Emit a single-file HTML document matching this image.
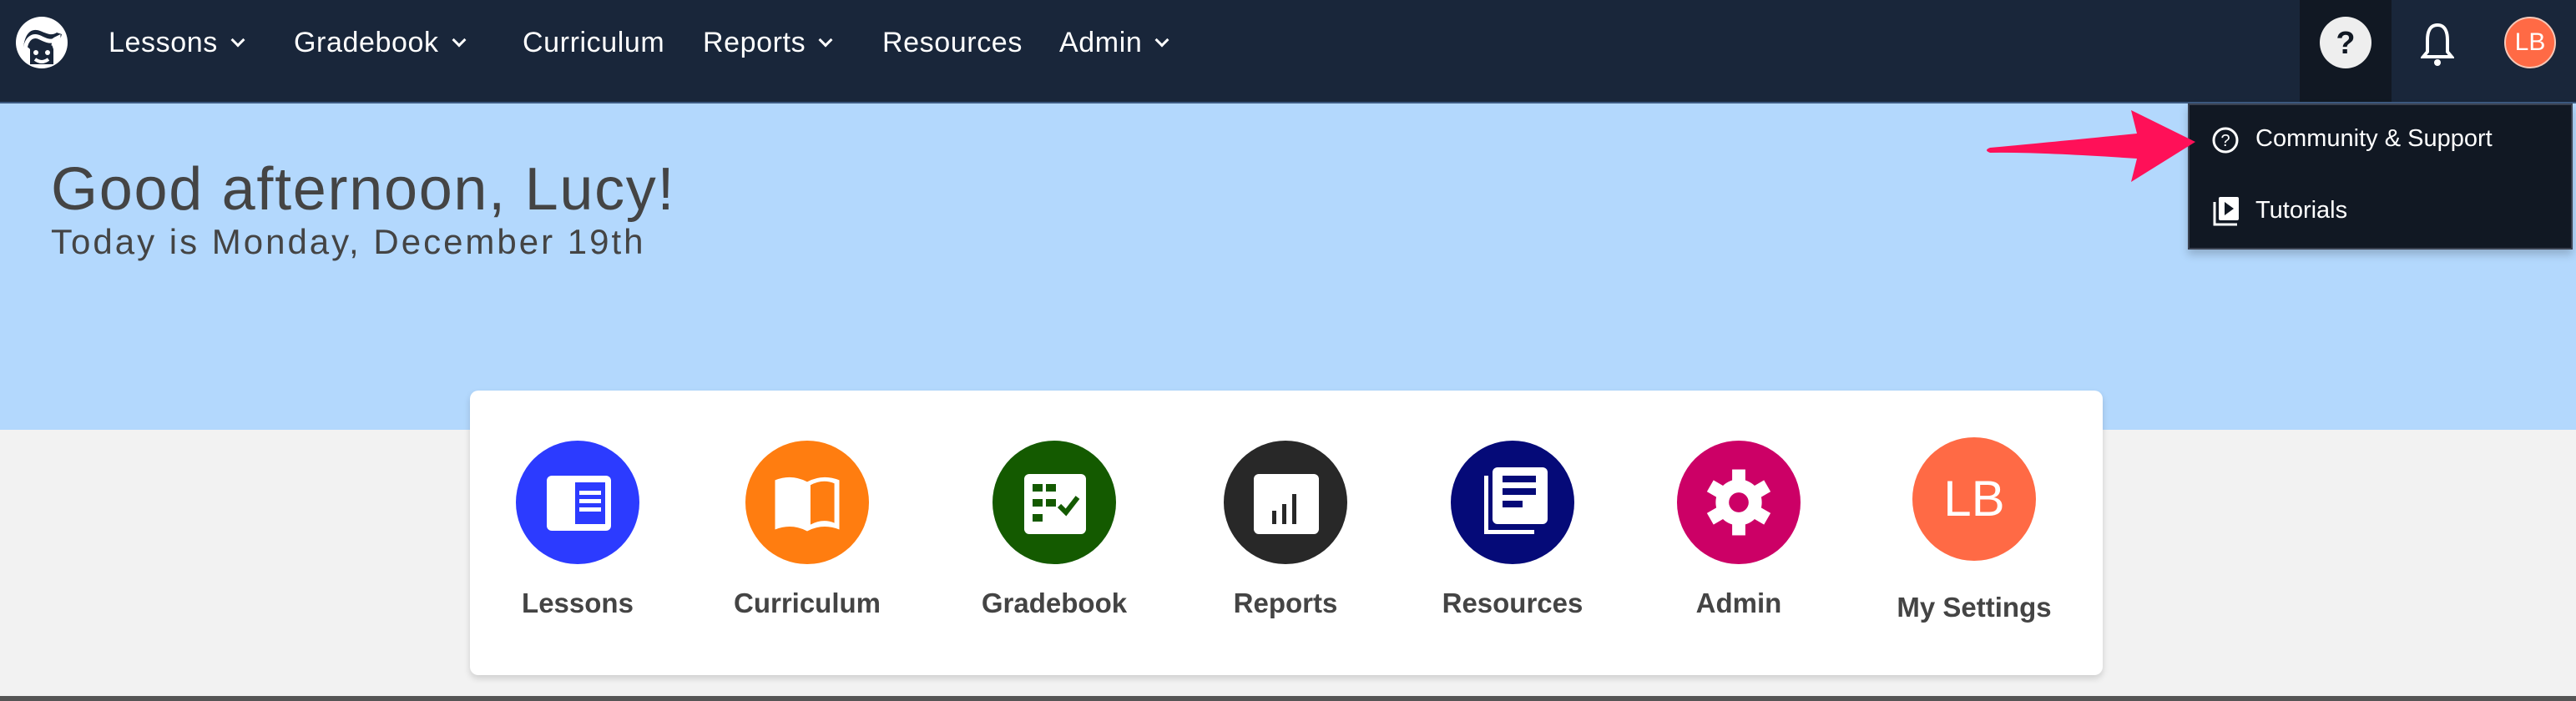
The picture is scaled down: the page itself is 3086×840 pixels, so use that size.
<!DOCTYPE html>
<html><head><meta charset="utf-8"><style>
*{margin:0;padding:0;box-sizing:border-box}
body{width:3086px;height:840px;overflow:hidden;background:#f2f2f2;font-family:"Liberation Sans",sans-serif;position:relative}
.nav{position:absolute;left:0;top:0;width:3086px;height:122px;background:#19263a}
.nav .it{position:absolute;top:30px;color:#fff;font-size:34px;line-height:42px;letter-spacing:0.6px}
.chev{display:inline-block;width:12px;height:12px;border-right:3px solid #fff;border-bottom:3px solid #fff;transform:rotate(45deg);margin-left:18px;position:relative;top:-8px}
.hero{position:absolute;left:0;top:122px;width:3086px;height:393px;background:#b3d8fd;border-top:2px solid #3d5a80}
.h1{position:absolute;left:61px;top:186px;font-size:72px;color:#444;letter-spacing:1.7px}
.h2{position:absolute;left:61px;top:266px;font-size:42px;color:#444;letter-spacing:3px}
.card{position:absolute;left:563px;top:468px;width:1956px;height:341px;background:#fff;border-radius:10px;box-shadow:0 4px 8px rgba(0,0,0,.15)}
.c{position:absolute;width:148px;height:148px;border-radius:50%}
.lbl{position:absolute;width:260px;text-align:center;font-size:33px;font-weight:bold;color:#444}
.dd{position:absolute;left:2621px;top:124px;width:461px;height:175px;background:#111823;border:2px solid #3a4150;box-shadow:0 6px 10px rgba(0,0,0,.2)}
.dd .t{position:absolute;left:79px;color:#fff;font-size:29px}
</style></head><body>
<div class="nav">
 <svg style="position:absolute;left:18px;top:19px" width="64" height="64" viewBox="0 0 64 64"><circle cx="32" cy="32" r="31" fill="#fff"/><path d="M10 38 C12 20 20 14 30 18 C40 22 44 24 50 20 L56 22 C54 30 50 34 44 34 L46 40 L46 58 L18 58 L18 40 C16 38 14 36 10 38Z" fill="#19263a"/><path d="M12 40 C14 26 22 22 30 26 C38 30 44 32 48 28 L52 26 C52 32 48 34 44 33" fill="none" stroke="#fff" stroke-width="5"/><circle cx="25" cy="44" r="3" fill="#fff"/><circle cx="39" cy="44" r="3" fill="#fff"/><path d="M24 52 Q32 58 40 52" stroke="#fff" stroke-width="4" fill="none"/></svg>
 <div class="it" style="left:130px">Lessons<span class="chev"></span></div>
 <div class="it" style="left:352px">Gradebook<span class="chev"></span></div>
 <div class="it" style="left:626px">Curriculum</div>
 <div class="it" style="left:842px">Reports<span class="chev"></span></div>
 <div class="it" style="left:1057px">Resources</div>
 <div class="it" style="left:1269px">Admin<span class="chev"></span></div>
 <div style="position:absolute;left:2755px;top:0;width:110px;height:122px;background:#111823"></div>
 <svg style="position:absolute;left:2779px;top:20px" width="62" height="62" viewBox="0 0 66 66"><ellipse cx="33" cy="33" rx="33" ry="33" fill="#eee"/><text x="33" y="47" text-anchor="middle" font-family="Liberation Sans" font-weight="bold" font-size="40" fill="#111823">?</text></svg>
 <svg style="position:absolute;left:2900px;top:26px" width="40" height="54" viewBox="0 0 40 54"><path d="M20 4 C10 4 8 14 8 22 L8 36 L3 42 L37 42 L32 36 L32 22 C32 14 30 4 20 4Z" fill="none" stroke="#fff" stroke-width="4"/><circle cx="20" cy="49" r="4" fill="#fff"/></svg>
 <div style="position:absolute;left:3000px;top:20px;width:62px;height:62px;border-radius:50%;background:#ff6a45;border:2px solid #f6c8b8;color:#fff;font-size:30px;text-align:center;line-height:58px">LB</div>
</div>
<div class="hero"></div>
<div class="h1">Good afternoon, Lucy!</div>
<div class="h2">Today is Monday, December 19th</div>
<div class="card">
 <div class="c" style="left:55px;top:60px;background:#2c3bff"><div style="position:absolute;left:37px;top:42px;width:77px;height:66px;background:#fff;border-radius:6px"></div><div style="position:absolute;left:71px;top:50px;width:36px;height:50px;background:#2c3bff"></div><div style="position:absolute;left:76px;top:60px;width:26px;height:5px;background:#fff;box-shadow:0 10px 0 #fff,0 20px 0 #fff"></div></div>
 <div class="c" style="left:330px;top:60px;background:#ff7d10"><svg width="148" height="148" viewBox="0 0 150 150"><path d="M36 48 Q56 40 75 50 Q94 40 114 48 L114 108 Q94 100 75 110 Q56 100 36 108Z" fill="#fff"/><path d="M79 54 Q94 46 108 52 L108 100 Q94 94 79 102Z" fill="#ff7d10"/></svg></div>
 <div class="c" style="left:626px;top:60px;background:#145a00"><div style="position:absolute;left:38px;top:40px;width:74px;height:72px;background:#fff;border-radius:6px"></div><div style="position:absolute;left:48px;top:52px;width:12px;height:9px;background:#145a00;box-shadow:0 18px 0 #145a00,0 36px 0 #145a00,16px 0 0 #145a00,16px 18px 0 #145a00"></div><svg style="position:absolute;left:0;top:0" width="150" height="150"><path d="M80 78 L88 86 L102 68" stroke="#145a00" stroke-width="6" fill="none"/></svg></div>
 <div class="c" style="left:903px;top:60px;background:#282828"><div style="position:absolute;left:36px;top:40px;width:78px;height:72px;background:#fff;border-radius:6px"></div><div style="position:absolute;left:58px;top:84px;width:5px;height:16px;background:#282828"></div><div style="position:absolute;left:70px;top:76px;width:5px;height:24px;background:#282828"></div><div style="position:absolute;left:82px;top:64px;width:5px;height:36px;background:#282828"></div></div>
 <div class="c" style="left:1175px;top:60px;background:#050a78"><div style="position:absolute;left:40px;top:42px;width:5px;height:70px;background:#fff"></div><div style="position:absolute;left:40px;top:107px;width:60px;height:5px;background:#fff"></div><div style="position:absolute;left:50px;top:32px;width:66px;height:68px;background:#fff;border-radius:6px"></div><div style="position:absolute;left:62px;top:42px;width:40px;height:8px;background:#050a78;box-shadow:0 15px 0 #050a78"></div><div style="position:absolute;left:62px;top:72px;width:24px;height:8px;background:#050a78"></div></div>
 <div class="c" style="left:1446px;top:60px;background:#cc0066"><svg width="148" height="148" viewBox="0 0 150 150"><g fill="#fff" transform="translate(75 75)"><circle r="28"/><g id="t"><rect x="-8" y="-40" width="16" height="16"/><rect x="-8" y="24" width="16" height="16"/></g><use href="#t" transform="rotate(60)"/><use href="#t" transform="rotate(120)"/><circle r="12" fill="#cc0066"/></g></svg></div>
 <div class="c" style="left:1728px;top:56px;background:#ff6a45;color:#fff;font-size:60px;text-align:center;line-height:148px">LB</div>
 <div class="lbl" style="left:-1px;top:236px">Lessons</div>
 <div class="lbl" style="left:274px;top:236px">Curriculum</div>
 <div class="lbl" style="left:570px;top:236px">Gradebook</div>
 <div class="lbl" style="left:847px;top:236px">Reports</div>
 <div class="lbl" style="left:1119px;top:236px">Resources</div>
 <div class="lbl" style="left:1390px;top:236px">Admin</div>
 <div class="lbl" style="left:1672px;top:241px">My Settings</div>
</div>
<div style="position:absolute;left:0;top:834px;width:3086px;height:6px;background:#555"></div>
<div class="dd">
 <svg style="position:absolute;left:27px;top:26px" width="32" height="32"><circle cx="16" cy="16" r="14" fill="none" stroke="#fff" stroke-width="3"/><text x="16" y="23" text-anchor="middle" font-family="Liberation Sans" font-size="20" fill="#fff">?</text></svg>
 <div class="t" style="top:24px">Community &amp; Support</div>
 <svg style="position:absolute;left:27px;top:110px" width="34" height="36"><path d="M3 6 L3 33 L30 33" stroke="#fff" stroke-width="3" fill="none"/><rect x="8" y="0" width="24" height="28" rx="2" fill="#fff"/><path d="M15 6 L26 14 L15 22Z" fill="#111823"/></svg>
 <div class="t" style="top:110px">Tutorials</div>
</div>
<svg style="position:absolute;left:2370px;top:125px" width="270" height="100" viewBox="2370 125 270 100"><path d="M2384 177 Q2440 172 2560 160 L2553 132 L2630 170 L2553 218 L2560 190 Q2440 182 2384 183 Q2376 180 2384 177Z" fill="#ff1058"/></svg>
</body></html>
